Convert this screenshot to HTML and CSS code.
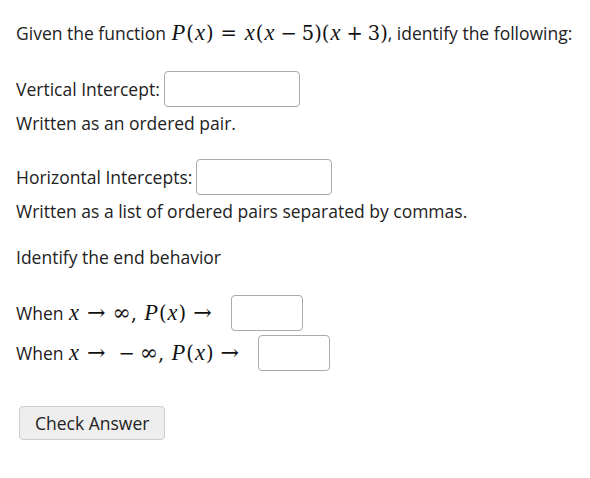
FILE: index.html
```html
<!DOCTYPE html>
<html>
  <head>
    <title>Polynomial intercepts</title>
    <link rel="stylesheet" href="styles.css">
  </head>
  <body>
    <div class="question">
      <p class="intro">Given the function <span class="math"><i>P</i>(<i>x</i>)<span class="rel">=</span><i>x</i>(<i>x</i><span class="bin">&minus;</span>5)(<i>x</i><span class="bin">+</span>3)</span>, identify the following:</p>

      <div class="row row-first">
        <span>Vertical Intercept:</span><input class="answer" type="text">
      </div>
      <p class="hint">Written as an ordered pair.</p>

      <div class="row row-second">
        <span>Horizontal Intercepts:</span><input class="answer" type="text">
      </div>
      <p class="hint">Written as a list of ordered pairs separated by commas.</p>

      <p class="heading">Identify the end behavior</p>

      <div class="row row-end">
        <span>When <span class="math"><i>x</i><span class="rel arr">&rarr;</span><span class="inf">&infin;</span>, <i>P</i>(<i>x</i>)<span class="rel arr">&rarr;</span></span></span><input class="answer small" type="text">
      </div>
      <div class="row row-end2">
        <span>When <span class="math"><i>x</i><span class="rel arr">&rarr;</span><span class="gap"></span><span class="bin">&minus;</span><span class="inf">&infin;</span>, <i>P</i>(<i>x</i>)<span class="rel arr">&rarr;</span></span></span><input class="answer small" type="text">
      </div>

      <button class="check" type="button">Check Answer</button>
    </div>
  </body>
</html>
```

FILE: styles.css
```css
body { margin: 0; padding: 21px 16px; font-family: "Open Sans", "Liberation Sans", sans-serif; font-size: 17.5px; line-height: 24px; color: #222; background: #fff; }

.question { display: flex; flex-direction: column; align-items: flex-start; }

p { margin: 0; }

.math { font-family: "DejaVu Serif", "Liberation Serif", serif; font-size: 19.5px; line-height: 20px; color: #111; }
.math i { font-family: "Liberation Serif", serif; font-style: italic; font-size: 22.5px; padding: 0 1px; }
.math .rel { margin: 0 7px; }
.math .arr { font-size: 22px; }
.math .inf { font-size: 22px; }
.math .bin { margin: 0 5px; }
.math .gap { display: inline-block; width: 1px; }

.row { display: flex; align-items: center; }
.row-first { margin-top: 26px; }
.row-second { margin-top: 24px; }
.row-end { margin-top: 26px; }
.row-end2 { margin-top: 4px; }

.hint { margin-top: 4px; }
.heading { margin-top: 22px; }

.answer { box-sizing: border-box; width: 136px; height: 36px; margin-left: 4px; border: 1px solid #aaa; border-radius: 4px; padding: 0 6px; font: inherit; background: #fff; }
.answer.small { width: 72px; margin-left: 12px; }
.answer:focus { outline: none; }

.check { margin-top: 35px; margin-left: 3px; height: 34px; padding: 0 15px; font: inherit; color: #222; background: #eee; border: 1px solid #ccc; border-radius: 4px; }
```
